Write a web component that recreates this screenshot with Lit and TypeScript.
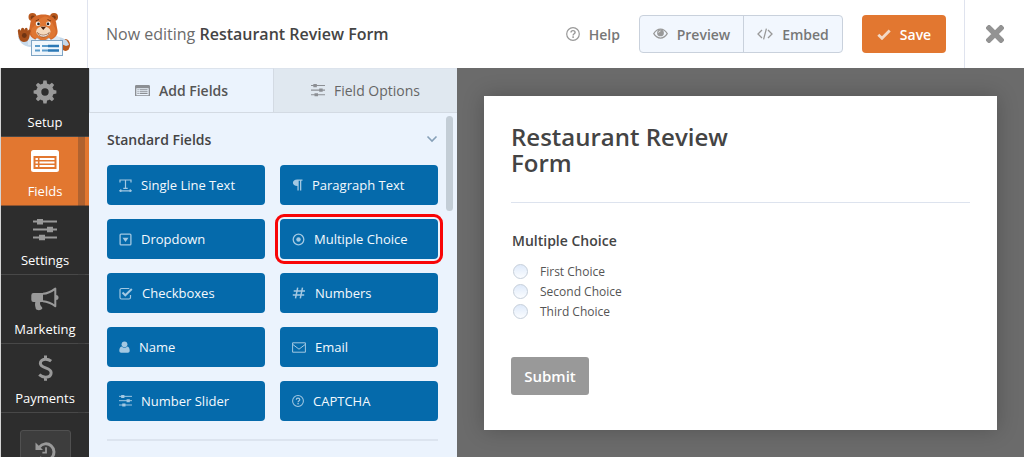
import { LitElement, html, css, svg, TemplateResult } from "lit";
import { customElement, property, state } from "lit/decorators.js";
import { classMap } from "lit/directives/class-map.js";

interface Glyph {
  w: number;
  h: number;
  body: TemplateResult;
}

const tooth = (angle: number) =>
  svg`<path d="M9.6 5.5 L10.4 0.6 H13.6 L14.4 5.5Z" transform="rotate(${angle} 12 12)" />`;

const sliders = svg`
  <path d="M0 2.5H24M0 10.5H24M0 18.5H24" fill="none" stroke="currentColor" stroke-width="1.8" />
  <path d="M4 0h6v5.4h-6zM14 7.8h6v5.4h-6zM6 15.8h6v5.4h-6z" />`;

const question = svg`
  <circle cx="7" cy="7" r="6.3" fill="none" stroke="currentColor" stroke-width="1.2" />
  <path d="M5 5.6C5 4.3 5.9 3.6 7 3.6S9.1 4.3 9.1 5.4C9.1 6.7 7.1 6.8 7.1 8.4" fill="none" stroke="currentColor" stroke-width="1.4" />
  <rect x="6.3" y="9.3" width="1.6" height="1.6" />`;

const glyphs: Record<string, Glyph> = {
  cog: {
    w: 24,
    h: 24,
    body: svg`
      ${[0, 45, 90, 135, 180, 225, 270, 315].map(tooth)}
      <circle cx="12" cy="12" r="6.2" fill="none" stroke="currentColor" stroke-width="5" />`,
  },
  list: {
    w: 28,
    h: 22,
    body: svg`
      <path fill-rule="evenodd" d="M2.5 0h23A2.500 2.500 0 0 1 28 2.500v17a2.500 2.500 0 0 1-2.500 2.500h-23A2.500 2.500 0 0 1 0 19.500v-17A2.500 2.500 0 0 1 2.500 0zM2.500 6v13h23V6z" />
      <path d="M4.500 8h2.400v2H4.500zM4.500 11.500h2.400v2H4.500zM4.500 15h2.400v2H4.500zM8.500 8h15v2h-15zM8.500 11.500h15v2h-15zM8.500 15h15v2h-15z" />`,
  },
  sliders: { w: 24, h: 21.2, body: sliders },
  horn: {
    w: 28,
    h: 24,
    body: svg`
      <path d="M2.500 6H12v9H9.200c-.6 2.200.2 3.600 1.800 5.200.8.900.2 1.600-.7 2.300-1.800 1-4.600.8-5.400-.5-.5-2.200-1.300-4.200-.6-7H2.500A2.200 2.200 0 0 1 .3 12.800V8.200A2.200 2.200 0 0 1 2.500 6z" />
      <path d="M12 6.800C16.500 6.500 20.500 4.500 24.300 1.600V19.200C20.500 16.300 16.500 14.500 12 14.200" fill="none" stroke="currentColor" stroke-width="2" stroke-linejoin="round" />
      <path d="M25 8a2.500 2.500 0 0 1 0 5z" />`,
  },
  dollar: {
    w: 16,
    h: 28,
    body: svg`<path d="M8 0.500V4M8 24v3.500M14 6.500C12.500 5.300 10.500 4.500 8.200 4.500 4.800 4.500 2.500 6.300 2.500 8.900 2.500 15 14 12.500 14 18.900 14 22 11.500 23.600 8 23.600 5.500 23.600 3.300 22.800 1.300 21" fill="none" stroke="currentColor" stroke-width="3.200" />`,
  },
  history: {
    w: 20,
    h: 20,
    body: svg`
      <path d="M4.200 5.800A7.700 7.700 0 1 1 4.500 15.400" fill="none" stroke="currentColor" stroke-width="2.800" />
      <path d="M0.500 1.500V8.600H7.600z" />
      <path d="M10.500 6v5H7" fill="none" stroke="currentColor" stroke-width="1.700" />`,
  },
  question: { w: 14, h: 14, body: question },
  eye: {
    w: 16,
    h: 12,
    body: svg`
      <path d="M.8 6C2.800 2.800 5.300 1.300 8 1.300S13.200 2.800 15.200 6C13.200 9.200 10.700 10.700 8 10.700S2.800 9.200.8 6z" fill="none" stroke="currentColor" stroke-width="1.300" />
      <circle cx="8" cy="5.300" r="3.600" />
      <path d="M6 5A2.100 2.100 0 0 1 8 3.200" fill="none" stroke="#fff" stroke-width=".8" />`,
  },
  code: {
    w: 16,
    h: 12,
    body: svg`<path d="M5 2 1 6l4 4M11 2l4 4-4 4M9.400.6 6.600 11.400" fill="none" stroke="currentColor" stroke-width="1.300" />`,
  },
  check: {
    w: 14,
    h: 11,
    body: svg`<path d="M1.300 5.700 5 9.300 12.700 1.500" fill="none" stroke="currentColor" stroke-width="2.800" />`,
  },
  close: {
    w: 18,
    h: 18,
    body: svg`<path d="M3 3 15 15M15 3 3 15" fill="none" stroke="currentColor" stroke-width="5.400" stroke-linecap="square" stroke-linejoin="round" />`,
  },
  chevron: {
    w: 12,
    h: 8,
    body: svg`<path d="M1.500 1.500 6 6l4.500-4.500" fill="none" stroke="currentColor" stroke-width="1.600" />`,
  },
  text: {
    w: 13,
    h: 13,
    body: svg`<path d="M1 3.400V1H12V3.400M6.500 1V9.300M4.300 9.300H8.700M.8 11.800H12.200M2.300 10.500.8 11.800l1.500 1.100M10.700 10.500l1.500 1.300-1.500 1.100" fill="none" stroke="currentColor" stroke-width="1.200" />`,
  },
  paragraph: {
    w: 11,
    h: 12,
    body: svg`<path d="M10.500.5V1.800H9.300V11.500H8V1.800H6.700V11.500H5.400V6.900C2.600 6.900.9 5.600.9 3.700S2.600.5 5.200.5z" />`,
  },
  dropdown: {
    w: 13,
    h: 13,
    body: svg`
      <rect x="1.100" y="1.100" width="10.800" height="10.800" rx="1" fill="none" stroke="currentColor" stroke-width="1.300" />
      <path d="M3.500 4.800H9.500L6.500 8.900z" />`,
  },
  radio: {
    w: 13,
    h: 13,
    body: svg`
      <circle cx="6.500" cy="6.500" r="5.300" fill="none" stroke="currentColor" stroke-width="1.300" />
      <circle cx="6.500" cy="6.500" r="2.200" />`,
  },
  tick: {
    w: 14,
    h: 13,
    body: svg`
      <path d="M10.300 1.500H2.500A1.500 1.500 0 0 0 1 3v7.500A1.500 1.500 0 0 0 2.500 12h7.500a1.500 1.500 0 0 0 1.500-1.500V8" fill="none" stroke="currentColor" stroke-width="1.200" />
      <path d="M3.500 5.500 6.300 8.300 12.800 2" fill="none" stroke="currentColor" stroke-width="2" />`,
  },
  hash: {
    w: 14,
    h: 12,
    body: svg`<path d="M5.700.7 3.500 11.300M10.500.7 8.300 11.300M1.700 3.900H13M.8 8H12.200" fill="none" stroke="currentColor" stroke-width="1.500" />`,
  },
  user: {
    w: 11,
    h: 12,
    body: svg`
      <circle cx="5.500" cy="3.300" r="2.900" />
      <path d="M2.600 5.400C1 5.800.3 7.500.3 9.700c0 1.300.8 2 1.800 2h6.800c1 0 1.800-.7 1.800-2 0-2.200-.7-3.900-2.300-4.300a4.200 4.200 0 0 1-5.800 0z" />`,
  },
  mail: {
    w: 14,
    h: 11,
    body: svg`<path d="M.6.800H13.400V10.200H.6zM.6 2.300 7 7.200l6.400-4.900" fill="none" stroke="currentColor" stroke-width="1" />`,
  },
};

const icon = (name: string, width?: number) => {
  const g = glyphs[name];
  const w = width ?? g.w;
  return html`<svg
    width=${w}
    height=${(w * g.h) / g.w}
    viewBox="0 0 ${g.w} ${g.h}"
    fill="currentColor"
    aria-hidden="true"
  >${g.body}</svg>`;
};

const base = css`
  *,
  *::before,
  *::after {
    box-sizing: border-box;
  }
  button {
    font: inherit;
    color: inherit;
    margin: 0;
    padding: 0;
    border: 0;
    background: none;
    cursor: pointer;
  }
  svg {
    display: block;
    flex: none;
  }
`;

@customElement("builder-header")
class BuilderHeader extends LitElement {
  @property() formName = "";

  static styles = [
    base,
    css`
      :host {
        display: flex;
        align-items: stretch;
        height: 68px;
        background: #fff;
        color: #777;
      }
      .logo {
        flex: 0 0 88px;
        display: grid;
        place-items: center;
        border-right: 1px solid #dfe3ee;
      }
      .title {
        flex: 1;
        align-self: center;
        padding-left: 18px;
        font-size: 16px;
        color: #6b6b6b;
        white-space: nowrap;
      }
      .title strong {
        font-weight: 600;
        color: #444;
      }
      .actions {
        display: flex;
        align-items: center;
        font-size: 14px;
        font-weight: 600;
      }
      .actions button {
        display: flex;
        align-items: center;
        justify-content: center;
        gap: 9px;
        height: 38px;
      }
      .help {
        margin-right: 19px;
        color: #777;
      }
      .group {
        display: flex;
        width: 204px;
        margin-right: 19px;
        border: 1px solid #c9d1dc;
        border-radius: 4px;
        background: #f2f7fe;
      }
      .group button {
        flex: 1 1 98px;
        height: 36px;
      }
      .group button:first-child {
        flex-basis: 104px;
        border-right: 1px solid #c9d1dc;
      }
      .group svg,
      .help svg {
        color: #999;
      }
      .actions .save {
        width: 84px;
        margin-right: 18px;
        border-radius: 4px;
        background: #e27730;
        color: #fff;
      }
      .save svg {
        color: #f3d9c6;
      }
      .close {
        flex: 0 0 60px;
        display: grid;
        place-items: center;
        border-left: 1px solid #dfe3ee;
        color: #939393;
      }
    `,
  ];

  render() {
    return html`
      <div class="logo">
        <svg width="54" height="44" viewBox="0 0 54 44" role="img" aria-label="Mascot">
          <circle cx="15.500" cy="5" r="4" fill="#b8581d" />
          <circle cx="37" cy="5" r="4" fill="#b8581d" />
          <circle cx="15.800" cy="5.600" r="2" fill="#7d3b14" />
          <circle cx="36.700" cy="5.600" r="2" fill="#7d3b14" />
          <ellipse cx="48.500" cy="33" rx="4.500" ry="6" fill="#b8581d" />
          <path d="M1 24 14 25l4 8-5 2C6 34 2 30 1 24z" fill="#c6d9ea" />
          <path d="M39 25c7 0 12 3 13 8l-3 1-7-3z" fill="#c6d9ea" />
          <path d="M11 33V27c0-3 5-5 15-5s17 2 17 5v6z" fill="#dbe8f3" />
          <path d="M13.500 10C15 4.500 20 2.500 26.300 2.500S37.500 4.500 39 10l1.600 9c.3 6-6 10-14.300 10S11.600 25 12 19z" fill="#d4692a" />
          <path d="M15 16c4-2 4-8 11.300-11S36 14 38 16c3 8-3 12-11.700 12S12 24 15 16z" fill="#df7733" />
          <ellipse cx="26.300" cy="19.500" rx="7.200" ry="5.200" fill="#f5d9bd" />
          <path d="M20.500 20.500c3 3.500 8.500 3.500 11.800 0-1.500 6-10.300 6-11.800 0z" fill="#fff" stroke="#6f3413" stroke-width=".6" />
          <path d="M23.600 14.800h5.400l-2.700 3.300z" fill="#45210e" />
          <circle cx="21" cy="11.700" r="2.200" fill="#fff" />
          <circle cx="31.400" cy="11.700" r="2.200" fill="#fff" />
          <circle cx="21.500" cy="11.900" r="1.300" fill="#222" />
          <circle cx="31" cy="11.900" r="1.300" fill="#222" />
          <path d="M18.600 9l3.400-1.500M30.500 7.500 34 9" stroke="#6f3413" stroke-width="1" />
          <path d="M1 20c-1-3 2-4 3-1 -.5-4 3-4.500 3.500-1 .5-3.500 3.500-3 3.300.7 1.700-2.700 4-.7 2.200 2.300-.5 6-2 9-6 9s-5.500-4-6-10z" fill="#a64f1b" />
          <circle cx="7.300" cy="23.500" r="2.400" fill="#6f3413" />
          <path d="M20 26l6 4 6-4 3 3-6 4-3-3-3 3-6-4z" fill="#f4f8fc" stroke="#9fb9d1" stroke-width=".6" />
          <rect x="14.500" y="28.500" width="31" height="15" fill="#f1f7fc" stroke="#7fa5c5" />
          <path d="M18 34h5M25 34h6M18 38.500h5M25 38.500h6" stroke="#5c9ccb" stroke-width="2" />
          <path d="M31 34h11M31 38.500h11" stroke="#2b78b5" stroke-width="2.400" />
        </svg>
      </div>
      <div class="title">Now editing <strong>${this.formName}</strong></div>
      <div class="actions">
        <button class="help">${icon("question")}Help</button>
        <div class="group">
          <button>${icon("eye", 15)}Preview</button>
          <button>${icon("code")}Embed</button>
        </div>
        <button class="save">${icon("check")}Save</button>
      </div>
      <button class="close" aria-label="Close">${icon("close")}</button>
    `;
  }
}

@customElement("builder-nav")
class BuilderNav extends LitElement {
  @state() private active = "Fields";

  private items = [
    { label: "Setup", glyph: "cog", size: 24 },
    { label: "Fields", glyph: "list", size: 28 },
    { label: "Settings", glyph: "sliders", size: 24 },
    { label: "Marketing", glyph: "horn", size: 28 },
    { label: "Payments", glyph: "dollar", size: 15 },
  ];

  static styles = [
    base,
    css`
      :host {
        position: relative;
        flex: 0 0 88px;
        display: flex;
        flex-direction: column;
        align-items: center;
        overflow: hidden;
        border-left: 1px solid #d5d5d5;
        background: #2d2d2d;
        color: #fff;
      }
      .item {
        flex: none;
        align-self: stretch;
        height: 69px;
        display: grid;
        grid-template-rows: 42px 18px;
        place-items: center;
        align-content: start;
        padding-top: 3px;
        border-bottom: 1px solid #484848;
        font-size: 13px;
        line-height: 18px;
      }
      .item svg {
        color: #999;
      }
      .item.active {
        background: #e27730;
        border-bottom-color: #8f5430;
      }
      .item.active svg {
        color: #fff;
      }
      .history {
        flex: none;
        width: 51px;
        height: 51px;
        margin-top: 17px;
        display: grid;
        place-items: center;
        padding-bottom: 8px;
        border: 1px solid #505050;
        border-radius: 3px;
        background: #3d3d3d;
        color: #999;
      }
      .track {
        position: absolute;
        top: 0;
        right: 4px;
        width: 7px;
        height: 100%;
        background: #2d2d2d;
        opacity: 0.28;
      }
    `,
  ];

  render() {
    return html`
      ${this.items.map(
        (i) => html`<button
          class=${classMap({ item: true, active: i.label === this.active })}
          @click=${() => (this.active = i.label)}
        >${icon(i.glyph, i.size)}<span>${i.label}</span></button>`
      )}
      <button class="history" aria-label="Revisions">${icon("history", 21)}</button>
      <div class="track"></div>
    `;
  }
}

@customElement("field-panel")
class FieldPanel extends LitElement {
  @state() private picked = "Multiple Choice";

  private fields = [
    ["text", "Single Line Text"],
    ["paragraph", "Paragraph Text"],
    ["dropdown", "Dropdown"],
    ["radio", "Multiple Choice"],
    ["tick", "Checkboxes"],
    ["hash", "Numbers"],
    ["user", "Name"],
    ["mail", "Email"],
    ["sliders", "Number Slider"],
    ["question", "CAPTCHA"],
  ];

  static styles = [
    base,
    css`
      :host {
        position: relative;
        flex: 0 0 368px;
        overflow: hidden;
        background: #ebf3fd;
        color: #444;
      }
      .tabs {
        display: grid;
        grid-template-columns: 1fr 1fr;
        height: 45px;
      }
      .tabs button {
        display: flex;
        align-items: center;
        justify-content: center;
        gap: 9px;
        border-top: 1px solid #dce3ec;
        border-bottom: 1px solid #d3dae3;
        font-size: 14px;
        color: #666;
        background: #e0e8f0;
        border-left: 1px solid #d3dae3;
      }
      .tabs button.on {
        font-weight: 600;
        color: #555;
        background: #ebf3fd;
      }
      .tabs svg {
        color: #8c8f94;
      }
      .group {
        margin: 0 19px 0 18px;
        padding-bottom: 18px;
        border-bottom: 2px solid #dce4ef;
      }
      .heading {
        display: flex;
        align-items: center;
        justify-content: space-between;
        width: 100%;
        height: 52px;
        font-size: 14px;
        font-weight: 600;
      }
      .heading svg {
        color: #86a0b8;
      }
      .grid {
        display: grid;
        grid-template-columns: 1fr 1fr;
        gap: 14px 15px;
      }
      .field {
        display: flex;
        align-items: center;
        gap: 9px;
        height: 40px;
        padding: 0 12px;
        border-radius: 4px;
        background: #056aab;
        color: #f4f9fd;
        font-size: 13px;
        font-weight: 500;
        white-space: nowrap;
      }
      .field svg {
        color: #a3c8e2;
      }
      .field.picked {
        outline: 3px solid #f80507;
        outline-offset: 2px;
      }
      .thumb {
        position: absolute;
        top: 48px;
        right: 4px;
        width: 7px;
        height: 95px;
        border-radius: 4px;
        background: #c3cdd6;
      }
    `,
  ];

  render() {
    const widths: Record<string, number> = { sliders: 13, question: 12 };
    return html`
      <div class="tabs">
        <button class="on">${icon("list", 15)}Add Fields</button>
        <button>${icon("sliders", 14)}Field Options</button>
      </div>
      <section class="group">
        <button class="heading">Standard Fields ${icon("chevron")}</button>
        <div class="grid">
          ${this.fields.map(
            ([glyph, label]) => html`<button
              class=${classMap({ field: true, picked: label === this.picked })}
              @click=${() => (this.picked = label)}
            >${icon(glyph, widths[glyph])}${label}</button>`
          )}
        </div>
      </section>
      <div class="thumb"></div>
    `;
  }
}

@customElement("form-preview")
class FormPreview extends LitElement {
  @property() formName = "";

  private choices = ["First Choice", "Second Choice", "Third Choice"];

  static styles = [
    base,
    css`
      :host {
        flex: 1;
        min-width: 0;
        overflow: hidden;
        padding: 28px 27px;
        background: #6b6b6b;
        color: #444;
      }
      .card {
        padding: 28px 27px 35px;
        background: #fff;
        box-shadow: 0 0 20px rgba(0, 0, 0, 0.22);
      }
      h1 {
        width: 50%;
        margin: 0;
        font-size: 24px;
        font-weight: 600;
        line-height: 26px;
      }
      hr {
        margin: 26px 0;
        border: 0;
        border-top: 1px solid #dde3ee;
      }
      fieldset {
        min-width: 0;
        margin: 0;
        padding: 0;
        border: 0;
      }
      legend {
        padding: 0 0 8px 1px;
        font-size: 14px;
        font-weight: 600;
        line-height: 24px;
      }
      label {
        display: flex;
        align-items: center;
        gap: 12px;
        height: 20px;
        padding-left: 2px;
        font-size: 12px;
        color: #555;
      }
      input {
        appearance: none;
        width: 15px;
        height: 15px;
        margin: 0;
        border: 1px solid #c6cfda;
        border-radius: 50%;
        background: linear-gradient(#dfeafa, #fbfdff);
      }
      input:checked {
        box-shadow: inset 0 0 0 4px #056aab;
      }
      .submit {
        margin-top: 36px;
        width: 78px;
        height: 38px;
        border-radius: 3px;
        background: #999;
        color: #fff;
        font-size: 15px;
        font-weight: 600;
      }
    `,
  ];

  render() {
    return html`
      <div class="card">
        <h1>${this.formName}</h1>
        <hr />
        <fieldset>
          <legend>Multiple Choice</legend>
          ${this.choices.map(
            (c) => html`<label><input type="radio" name="choice" value=${c} />${c}</label>`
          )}
        </fieldset>
        <button class="submit">Submit</button>
      </div>
    `;
  }
}

@customElement("app-root")
class AppRoot extends LitElement {
  @state() private formName = "Restaurant Review Form";

  static styles = css`
    :host {
      display: flex;
      flex-direction: column;
      height: 100vh;
      overflow: hidden;
      font-family: "Open Sans", "Noto Sans", sans-serif;
    }
    .body {
      flex: 1;
      min-height: 0;
      display: flex;
    }
  `;

  render() {
    return html`
      <builder-header .formName=${this.formName}></builder-header>
      <div class="body">
        <builder-nav></builder-nav>
        <field-panel></field-panel>
        <form-preview .formName=${this.formName}></form-preview>
      </div>
    `;
  }
}
